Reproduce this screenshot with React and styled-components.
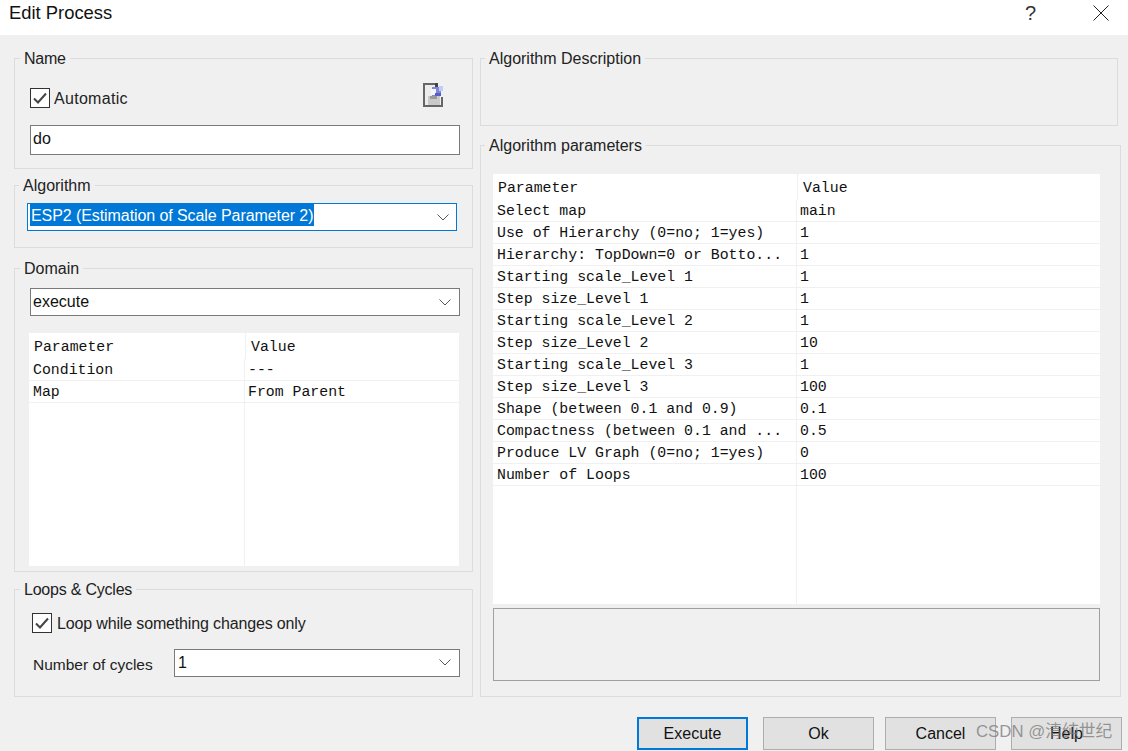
import React from "react";
import styled, { createGlobalStyle } from "styled-components";

const GlobalStyle = createGlobalStyle`
  html, body {
    margin: 0;
    padding: 0;
    background: #f0f0f0;
    overflow: hidden;
  }
`;

const domainRows = [
  ["Condition", "---"],
  ["Map", "From Parent"],
];

const algorithmRows = [
  ["Select map", "main"],
  ["Use of Hierarchy (0=no; 1=yes)", "1"],
  ["Hierarchy: TopDown=0 or Botto...", "1"],
  ["Starting scale_Level 1", "1"],
  ["Step size_Level 1", "1"],
  ["Starting scale_Level 2", "1"],
  ["Step size_Level 2", "10"],
  ["Starting scale_Level 3", "1"],
  ["Step size_Level 3", "100"],
  ["Shape (between 0.1 and 0.9)", "0.1"],
  ["Compactness (between 0.1 and ...", "0.5"],
  ["Produce LV Graph (0=no; 1=yes)", "0"],
  ["Number of Loops", "100"],
];

function Chevron() {
  return (
    <ChevronIcon width="12" height="7" viewBox="0 0 12 7">
      <path d="M0.5 0.5 L6 6 L11.5 0.5" fill="none" stroke="#555" strokeWidth="1" />
    </ChevronIcon>
  );
}

function CheckBox() {
  return (
    <CheckFrame>
      <svg width="18" height="18" viewBox="0 0 18 18">
        <path d="M3 9.5 L7 13.5 L15 4.5" fill="none" stroke="#444" strokeWidth="2" />
      </svg>
    </CheckFrame>
  );
}

function DocIcon() {
  return (
    <IconSlot width="20" height="24" viewBox="0 0 20 24">
      <rect x="2" y="2" width="15" height="20" fill="#ececec" />
      <rect x="5" y="13" width="12" height="9" fill="#c9c9c9" />
      <path d="M1 0 V23 H19 V14" fill="none" stroke="#666" strokeWidth="2" />
      <path d="M1 1 H12" fill="none" stroke="#666" strokeWidth="2" />
      <rect x="12" y="0" width="3" height="4" fill="#444" />
      <rect x="9" y="4" width="9" height="9" fill="#7f86dc" />
      <rect x="8" y="6" width="5" height="6" fill="#f3f5ff" />
      <rect x="16" y="3" width="4" height="5" fill="#bcd0f6" />
      <rect x="12" y="10" width="6" height="3" fill="#5a5ec4" />
      <rect x="7" y="13" width="7" height="3" fill="#9a9a9a" />
    </IconSlot>
  );
}

function ParamGrid({ rows, width, height, col, top }) {
  return (
    <Grid $width={width} $height={height} $top={top}>
      <HeaderRow $col={col}>
        <HeaderCell>Parameter</HeaderCell>
        <HeaderCell>Value</HeaderCell>
      </HeaderRow>
      {rows.map(([name, value]) => (
        <GridRow $col={col} key={name}>
          <GridCell>{name}</GridCell>
          <GridCell>{value}</GridCell>
        </GridRow>
      ))}
      <FillerRow $col={col}>
        <GridCell />
        <GridCell />
      </FillerRow>
    </Grid>
  );
}

export default function App() {
  return (
    <>
      <GlobalStyle />
      <Dialog>
        <TitleBar>
          <Title>Edit Process</Title>
          <HelpMark>?</HelpMark>
          <CloseIcon width="16" height="16" viewBox="0 0 16 16">
            <path d="M0.5 0.5 L15.5 15.5 M15.5 0.5 L0.5 15.5" stroke="#222" strokeWidth="1" />
          </CloseIcon>
        </TitleBar>

        <Body>
          <LeftColumn>
            <Group $height={111}>
              <Legend $left={5} $tight>Name</Legend>
              <AutoRow>
                <CheckRow>
                  <CheckBox />
                  <CheckLabel $spacing={0.3}>Automatic</CheckLabel>
                </CheckRow>
                <DocIcon />
              </AutoRow>
              <TextInput>do</TextInput>
            </Group>

            <Group $height={63} $top={16}>
              <Legend $left={4}>Algorithm</Legend>
              <AlgorithmSelect>
                <Selected>ESP2 (Estimation of Scale Parameter 2)</Selected>
                <Chevron />
              </AlgorithmSelect>
            </Group>

            <Group $height={304} $top={20}>
              <Legend $left={5}>Domain</Legend>
              <DomainSelect>
                execute
                <Chevron />
              </DomainSelect>
              <ParamGrid rows={domainRows} width={430} height={233} col={216} top={17} />
            </Group>

            <Group $height={108} $top={17}>
              <Legend $left={5} $tight>Loops &amp; Cycles</Legend>
              <LoopRow>
                <CheckBox />
                <CheckLabel $spacing={-0.15}>Loop while something changes only</CheckLabel>
              </LoopRow>
              <CyclesRow>
                <CyclesLabel>Number of cycles</CyclesLabel>
                <CyclesSelect>
                  1
                  <Chevron />
                </CyclesSelect>
              </CyclesRow>
            </Group>
          </LeftColumn>

          <RightColumn>
            <Group $height={68} $width={638}>
              <Legend $left={4}>Algorithm Description</Legend>
            </Group>
            <Group $height={552} $top={19}>
              <Legend $left={4}>Algorithm parameters</Legend>
              <ParamsInner>
                <ParamGrid rows={algorithmRows} width={607} height={430} col={304} top={0} />
                <NoteBox />
              </ParamsInner>
            </Group>
          </RightColumn>
        </Body>

        <Footer>
          <DialogButton $primary>Execute</DialogButton>
          <DialogButton $gap={15}>Ok</DialogButton>
          <DialogButton $gap={11}>Cancel</DialogButton>
          <DialogButton $gap={15}>Help</DialogButton>
          <Watermark>CSDN @清纯世纪</Watermark>
        </Footer>
      </Dialog>
    </>
  );
}

const Dialog = styled.div`
  position: relative;
  width: 1128px;
  height: 751px;
  overflow: hidden;
  display: flex;
  flex-direction: column;
  background: #f0f0f0;
  color: #111;
  font-family: "Liberation Sans", Arial, sans-serif;
  font-size: 16px;
`;

const TitleBar = styled.div`
  height: 35px;
  flex: none;
  background: #fff;
  display: flex;
  align-items: center;
  padding: 0 19px 10px 9px;
  box-sizing: border-box;
`;

const Title = styled.div`
  flex: 1;
  font-size: 18.4px;
  line-height: 24px;
  color: #111;
`;

const HelpMark = styled.div`
  font-size: 20px;
  line-height: 24px;
  color: #333;
  margin-right: 57px;
`;

const CloseIcon = styled.svg`
  display: block;
`;

const Body = styled.div`
  flex: none;
  height: 682px;
  box-sizing: border-box;
  padding: 23px 0 0 14px;
  display: flex;
  gap: 7px;
`;

const LeftColumn = styled.div`
  width: 459px;
  display: flex;
  flex-direction: column;
`;

const RightColumn = styled.div`
  width: 641px;
  display: flex;
  flex-direction: column;
`;

const Group = styled.div`
  box-sizing: border-box;
  height: ${(p) => p.$height}px;
  width: ${(p) => (p.$width ? `${p.$width}px` : "auto")};
  margin-top: ${(p) => p.$top || 0}px;
  border: 1px solid #dcdcdc;
  display: flex;
  flex-direction: column;
  flex: none;
`;

const Legend = styled.div`
  align-self: flex-start;
  height: 20px;
  line-height: 20px;
  margin: -10px 0 0 ${(p) => p.$left}px;
  padding: 0 4px;
  background: #f0f0f0;
  color: #222;
  letter-spacing: ${(p) => (p.$tight ? "-0.22px" : "0")};
`;

const AutoRow = styled.div`
  display: flex;
  align-items: center;
  justify-content: space-between;
  margin: 14px 29px 0 15px;
  height: 30px;
`;

const IconSlot = styled.svg`
  align-self: flex-start;
`;

const CheckRow = styled.div`
  display: flex;
  align-items: center;
  gap: 4px;
`;

const CheckFrame = styled.div`
  width: 20px;
  height: 20px;
  box-sizing: border-box;
  border: 1px solid #333;
  background: #fff;
  flex: none;
`;

const CheckLabel = styled.span`
  letter-spacing: ${(p) => p.$spacing}px;
  color: #222;
  padding-top: 2px;
`;

const TextInput = styled.div`
  box-sizing: border-box;
  width: 430px;
  height: 30px;
  line-height: 26px;
  margin: 12px 0 0 15px;
  padding-left: 2px;
  border: 1px solid #7a7a7a;
  background: #fff;
`;

const ChevronIcon = styled.svg`
  flex: none;
`;

const SelectBox = styled.div`
  box-sizing: border-box;
  display: flex;
  align-items: center;
  justify-content: space-between;
  background: #fff;
  border: 1px solid #7a7a7a;
  padding: 0 8px 0 2px;
`;

const AlgorithmSelect = styled(SelectBox)`
  width: 430px;
  height: 28px;
  margin: 7px 0 0 12px;
  border-color: #0078d7;
  padding-left: 2px;
  padding-right: 7px;
`;

const Selected = styled.span`
  background: #0078d7;
  color: #fff;
  line-height: 20px;
  padding: 2px 1px 0;
  margin-bottom: 4px;
  letter-spacing: -0.08px;
`;

const DomainSelect = styled(SelectBox)`
  width: 430px;
  height: 28px;
  margin: 9px 0 0 15px;
`;

const Grid = styled.div`
  box-sizing: border-box;
  width: ${(p) => p.$width}px;
  height: ${(p) => p.$height}px;
  margin-top: ${(p) => p.$top}px;
  margin-left: ${(p) => (p.$top ? 14 : 0)}px;
  background: #fff;
  display: flex;
  flex-direction: column;
  font-family: "Liberation Mono", "DejaVu Sans Mono", monospace;
  font-size: 14.85px;
  color: #111;
`;

const GridRow = styled.div`
  box-sizing: border-box;
  flex: none;
  height: 22px;
  display: grid;
  grid-template-columns: ${(p) => p.$col}px 1fr;
  border-bottom: 1px solid #f0f0f0;
`;

const HeaderRow = styled(GridRow)`
  height: 26px;
  border-bottom: 0;
  grid-template-columns: ${(p) => p.$col + 1}px 1fr;
`;

const FillerRow = styled(GridRow)`
  flex: 1;
  border-bottom: 0;
`;

const GridCell = styled.div`
  box-sizing: border-box;
  padding: 1px 0 0 4px;
  line-height: 20px;
  white-space: nowrap;
  overflow: hidden;
  &:first-child {
    border-right: 1px solid #f0f0f0;
  }
  &:last-child {
    padding-left: 3px;
  }
`;

const HeaderCell = styled(GridCell)`
  padding-left: 5px;
  line-height: 27px;
  &:last-child {
    padding-left: 5px;
  }
`;

const LoopRow = styled.div`
  display: flex;
  align-items: center;
  gap: 5px;
  margin: 13px 0 0 17px;
`;

const CyclesRow = styled.div`
  display: flex;
  align-items: center;
  margin: 16px 0 0 18px;
`;

const CyclesLabel = styled.span`
  width: 141px;
  flex: none;
  font-size: 15.5px;
  color: #222;
  padding-top: 3px;
`;

const CyclesSelect = styled(SelectBox)`
  width: 286px;
  height: 28px;
  padding-left: 3px;
  padding-bottom: 1px;
`;

const ParamsInner = styled.div`
  margin: 18px 0 0 12px;
  display: flex;
  flex-direction: column;
`;

const NoteBox = styled.div`
  box-sizing: border-box;
  width: 607px;
  height: 73px;
  margin-top: 4px;
  border: 1px solid #a0a0a0;
`;

const Footer = styled.div`
  position: relative;
  display: flex;
  height: 33px;
  margin-top: 0;
  padding-left: 637px;
`;

const DialogButton = styled.div`
  box-sizing: border-box;
  flex: none;
  width: 111px;
  height: 33px;
  margin-left: ${(p) => p.$gap || 0}px;
  display: flex;
  align-items: center;
  justify-content: center;
  background: #e1e1e1;
  border: ${(p) => (p.$primary ? "2px solid #0078d7" : "1px solid #adadad")};
  color: #111;
`;

const Watermark = styled.div`
  position: absolute;
  left: 976px;
  top: 3px;
  font-family: "Liberation Sans", "Noto Sans CJK SC", sans-serif;
  font-size: 16.8px;
  line-height: 24px;
  white-space: nowrap;
  color: rgba(120, 120, 120, 0.75);
`;
